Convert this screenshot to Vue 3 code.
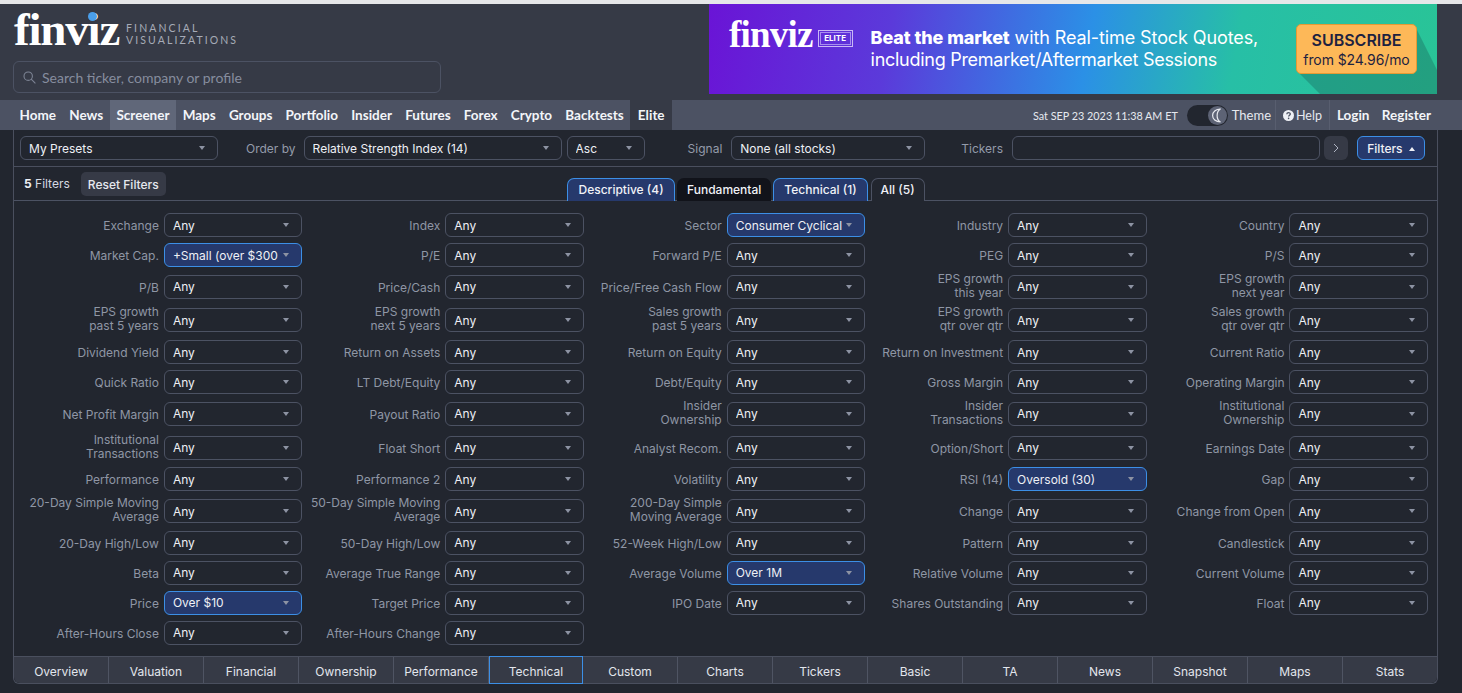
<script setup>
const navLeft = ["Home", "News", "Screener", "Maps", "Groups", "Portfolio", "Insider", "Futures", "Forex", "Crypto", "Backtests"]
const views = ["Overview", "Valuation", "Financial", "Ownership", "Performance", "Technical", "Custom", "Charts", "Tickers", "Basic", "TA", "News", "Snapshot", "Maps", "Stats"]

// label, picked value (only for the active filters), tall = two line row
const rows = [
  { cells: [["Exchange"], ["Index"], ["Sector", "Consumer Cyclical"], ["Industry"], ["Country"]] },
  { cells: [["Market Cap.", "+Small (over $300"], ["P/E"], ["Forward P/E"], ["PEG"], ["P/S"]] },
  { tall: true, cells: [["P/B"], ["Price/Cash"], ["Price/Free Cash Flow"], ["EPS growth\nthis year"], ["EPS growth\nnext year"]] },
  { tall: true, cells: [["EPS growth\npast 5 years"], ["EPS growth\nnext 5 years"], ["Sales growth\npast 5 years"], ["EPS growth\nqtr over qtr"], ["Sales growth\nqtr over qtr"]] },
  { cells: [["Dividend Yield"], ["Return on Assets"], ["Return on Equity"], ["Return on Investment"], ["Current Ratio"]] },
  { cells: [["Quick Ratio"], ["LT Debt/Equity"], ["Debt/Equity"], ["Gross Margin"], ["Operating Margin"]] },
  { tall: true, cells: [["Net Profit Margin"], ["Payout Ratio"], ["Insider\nOwnership"], ["Insider\nTransactions"], ["Institutional\nOwnership"]] },
  { tall: true, cells: [["Institutional\nTransactions"], ["Float Short"], ["Analyst Recom."], ["Option/Short"], ["Earnings Date"]] },
  { cells: [["Performance"], ["Performance 2"], ["Volatility"], ["RSI (14)", "Oversold (30)"], ["Gap"]] },
  { tall: true, cells: [["20-Day Simple Moving\nAverage"], ["50-Day Simple Moving\nAverage"], ["200-Day Simple\nMoving Average"], ["Change"], ["Change from Open"]] },
  { cells: [["20-Day High/Low"], ["50-Day High/Low"], ["52-Week High/Low"], ["Pattern"], ["Candlestick"]] },
  { cells: [["Beta"], ["Average True Range"], ["Average Volume", "Over 1M"], ["Relative Volume"], ["Current Volume"]] },
  { cells: [["Price", "Over $10"], ["Target Price"], ["IPO Date"], ["Shares Outstanding"], ["Float"]] },
  { cells: [["After-Hours Close"], ["After-Hours Change"]] },
]
</script>

<template>
  <div class="page">
    <header class="header">
      <div class="brand">
        <div class="logo-row">
          <div class="logo">finviz<span class="logo-dot"></span></div>
          <div class="tagline">FINANCIAL<br />VISUALIZATIONS</div>
        </div>
        <div class="search">
          <svg width="13" height="13" viewBox="0 0 13 13" fill="none" stroke="#7d8494" stroke-width="1.1">
            <circle cx="5.2" cy="5.2" r="4.2" />
            <path d="M8.2 8.2 12.4 12.4" />
          </svg>
          <span>Search ticker, company or profile</span>
        </div>
      </div>
      <div class="banner">
        <div class="banner-shadow"></div>
        <div class="banner-logo">finviz</div>
        <div class="elite-badge"><span>ELITE</span></div>
        <div class="banner-text">
          <div><b>Beat the market</b> with Real-time Stock Quotes,</div>
          <div class="second">including Premarket/Aftermarket Sessions</div>
        </div>
        <div class="subscribe">
          <strong>SUBSCRIBE</strong>
          <span>from $24.96/mo</span>
        </div>
      </div>
    </header>

    <nav class="nav">
      <a v-for="item in navLeft" :key="item" class="nav-item" :class="{ current: item === 'Screener' }">{{ item }}</a>
      <a class="nav-item elite">Elite</a>
      <div class="nav-right">
        <span class="date">Sat SEP 23 2023 11:38 AM ET</span>
        <div class="theme">
          <div class="toggle">
            <div class="knob">
              <svg width="12" height="15" viewBox="0 0 12 15" fill="none" stroke="#e8eaf0" stroke-width="1.2">
                <path d="M9.5 1C5.4 3 4.6 11.4 9.5 14 4.6 14 1.6 11 1.6 7.5S4.6 1 9.5 1Z" />
              </svg>
            </div>
          </div>
          <span>Theme</span>
        </div>
        <div class="help">
          <svg width="11" height="11" viewBox="0 0 11 11">
            <circle cx="5.5" cy="5.5" r="5.5" fill="#eef0f5" />
            <path d="M3.8 4.2C3.9 2.2 7.3 2.2 7.3 4.1 7.3 5.3 5.6 5.3 5.6 6.6" fill="none" stroke="#4c5263" stroke-width="1.3" />
            <circle cx="5.6" cy="8.4" r=".8" fill="#4c5263" />
          </svg>
          <span>Help</span>
        </div>
        <a class="nav-item login">Login</a>
        <a class="nav-item register">Register</a>
      </div>
    </nav>

    <main class="panel">
      <div class="toolbar">
        <div class="select presets"><span>My Presets</span><i></i></div>
        <label class="order-label">Order by</label>
        <div class="select order"><span>Relative Strength Index (14)</span><i></i></div>
        <div class="select asc"><span>Asc</span><i></i></div>
        <label class="signal-label">Signal</label>
        <div class="select signal"><span>None (all stocks)</span><i></i></div>
        <label class="tickers-label">Tickers</label>
        <div class="tickers-input"></div>
        <button class="go">
          <svg width="6" height="10" viewBox="0 0 6 10" fill="none" stroke="#aeb4c2"><path d="M1 1l4 4-4 4" /></svg>
        </button>
        <button class="filters-btn">Filters <em></em></button>
      </div>

      <div class="tabs-row">
        <div class="count"><b>5</b> Filters</div>
        <button class="reset">Reset Filters</button>
        <div class="tabs">
          <div class="tab on">Descriptive (4)</div>
          <div class="tab black">Fundamental</div>
          <div class="tab on tech">Technical (1)</div>
          <div class="tab all">All (5)</div>
        </div>
      </div>

      <div class="filters">
        <div v-for="(row, r) in rows" :key="r" class="filter-row" :class="{ tall: row.tall }">
          <div v-for="cell in row.cells" :key="cell[0]" class="filter">
            <div class="filter-label" :class="{ two: cell[0].includes('\n') }">{{ cell[0] }}</div>
            <div class="select" :class="{ picked: cell[1] }"><span>{{ cell[1] || "Any" }}</span><i></i></div>
          </div>
        </div>
      </div>

      <div class="views">
        <div v-for="view in views" :key="view" class="view" :class="{ active: view === 'Technical' }">{{ view }}</div>
      </div>
    </main>
  </div>
</template>

<style scoped>
.page {
  width: 1462px;
  height: 693px;
  overflow: hidden;
  background: #22262f;
  border-top: 4px solid #e6e7e9;
  box-sizing: border-box;
  font-family: Inter, "Liberation Sans", sans-serif;
  font-size: 12px;
  color: #e6e9ef;
}

.header {
  height: 96px;
  background: #363a46;
  display: flex;
  justify-content: space-between;
  padding: 0 25px 0 13px;
}

.logo-row {
  display: flex;
  align-items: flex-end;
  height: 41px;
  padding-top: 4px;
}

.logo {
  position: relative;
  font-family: "Liberation Serif", serif;
  font-weight: 700;
  font-size: 47px;
  line-height: 40px;
  letter-spacing: -1.2px;
  color: #fff;
  margin-left: 1px;
}

.logo-dot {
  position: absolute;
  left: 74px;
  top: 3px;
  width: 9px;
  height: 9px;
  border-radius: 50%;
  background: #4a9eea;
}

.tagline {
  font-family: Lato, sans-serif;
  font-size: 10.5px;
  line-height: 12px;
  letter-spacing: 2.1px;
  color: #a6abb7;
  margin: 0 0 3px 7px;
}

.search {
  width: 428px;
  height: 32px;
  margin-top: 12px;
  box-sizing: border-box;
  border: 1px solid #4c5263;
  border-radius: 6px;
  display: flex;
  align-items: center;
  gap: 6px;
  padding-left: 9px;
  font-family: Lato, sans-serif;
  font-size: 14px;
  color: #868d9e;
}

.banner {
  position: relative;
  width: 728px;
  height: 90px;
  background: linear-gradient(100deg, #6a14d6 0%, #5b3ada 25%, #2b90e6 52%, #27bfa6 72%, #29c497 100%);
  display: flex;
  align-items: flex-start;
  color: #fff;
}

.banner-shadow {
  position: absolute;
  inset: 0;
  background: rgba(20, 70, 70, 0.28);
  clip-path: polygon(708px 26px, 728px 66px, 728px 90px, 611px 90px, 587px 66px);
}

.banner-logo {
  font-family: "Liberation Serif", serif;
  font-weight: 700;
  font-size: 37px;
  line-height: 30px;
  letter-spacing: -0.8px;
  margin: 16px 0 0 20px;
}

.elite-badge {
  width: 35px;
  height: 17px;
  box-sizing: border-box;
  border: 1px solid #c9b8f5;
  margin: 26px 0 0 5px;
  padding: 1px;
  display: flex;
}

.elite-badge span {
  flex: 1;
  border: 1px solid #a88ef0;
  font-size: 8px;
  font-weight: 700;
  line-height: 11px;
  text-align: center;
}

.banner-text {
  margin: 23px 0 0 18px;
  font-size: 18px;
  line-height: 22px;
  letter-spacing: -0.1px;
}

.banner-text b {
  font-weight: 800;
}

.banner-text .second {
  letter-spacing: -0.28px;
}

.subscribe {
  position: absolute;
  left: 587px;
  top: 20px;
  width: 121px;
  height: 50px;
  box-sizing: border-box;
  background: #fdb858;
  border: 1px solid #e59a34;
  border-radius: 5px;
  display: flex;
  flex-direction: column;
  align-items: center;
  padding-top: 6px;
  color: #1d2240;
}

.subscribe strong {
  font-size: 16px;
  line-height: 19px;
  font-weight: 600;
}

.subscribe span {
  font-size: 14px;
  line-height: 19px;
  font-weight: 400;
  letter-spacing: -0.1px;
}

.nav {
  height: 30px;
  background: #4c5263;
  display: flex;
  padding-left: 13px;
  padding-right: 31px;
}

.nav-item {
  display: flex;
  align-items: center;
  padding: 0 6.6px;
  font-family: Lato, sans-serif;
  font-size: 13.5px;
  font-weight: 700;
  color: #f3f5f9;
}

.nav-item.current {
  background: #606779;
}

.nav-item.elite {
  background: #363a46;
  padding: 0 7.5px;
}

.nav-right {
  margin-left: auto;
  display: flex;
  align-items: center;
  height: 100%;
}

.date {
  font-family: Lato, sans-serif;
  font-size: 10.8px;
  margin-right: 9px;
}

.theme {
  display: flex;
  align-items: center;
  gap: 4px;
  height: 100%;
  padding: 0 4px 0 0;
  font-family: Lato, sans-serif;
  font-size: 13px;
}

.toggle {
  width: 41px;
  height: 21px;
  border-radius: 11px;
  background: #22262f;
  position: relative;
}

.knob {
  position: absolute;
  right: 1px;
  top: 1px;
  width: 19px;
  height: 19px;
  border-radius: 50%;
  background: #5d6375;
  display: flex;
  align-items: center;
  justify-content: center;
}

.help {
  display: flex;
  align-items: center;
  gap: 2px;
  height: 100%;
  padding: 0 7px;
  border-left: 1px solid #585e6f;
  border-right: 1px solid #585e6f;
  font-family: Lato, sans-serif;
  font-size: 12.5px;
}

.login {
  margin-left: 7px;
  padding: 0 6.2px 0 0;
}

.register {
  padding: 0 0 0 6.2px;
}

.panel {
  width: 1425px;
  height: 554px;
  margin-left: 13px;
  box-sizing: border-box;
  border: 1px solid #4a4f5e;
  border-top: 0;
  border-radius: 0 0 6px 6px;
  display: flex;
  flex-direction: column;
}

.toolbar {
  height: 37px;
  flex: none;
  box-sizing: border-box;
  border-bottom: 1px solid #4a4f5e;
  display: flex;
  align-items: flex-start;
  padding: 6px 0 0 6px;
}

.select {
  height: 24px;
  width: 138.5px;
  flex: none;
  box-sizing: border-box;
  border: 1px solid #4c5263;
  border-radius: 6px;
  display: flex;
  align-items: center;
  padding: 0 12px 0 8px;
  gap: 4px;
  color: #eef0f5;
}

.select span {
  flex: 1;
  min-width: 0;
  overflow: hidden;
  white-space: nowrap;
}

.select i {
  flex: none;
  width: 0;
  height: 0;
  border-left: 3.5px solid transparent;
  border-right: 3.5px solid transparent;
  border-top: 4px solid #8d93a3;
}

.select.picked {
  background: #26396c;
  border-color: #3c8fe6;
}

.select.presets {
  width: 198px;
}

.select.order {
  width: 258px;
}

.select.asc {
  width: 78px;
  margin-left: 5px;
}

.select.signal {
  width: 194px;
}

.toolbar label {
  color: #949baa;
  line-height: 25px;
  flex: none;
}

.order-label {
  margin: 0 8px 0 28px;
}

.signal-label {
  margin: 0 9px 0 43px;
}

.tickers-label {
  margin: 0 9px 0 36px;
}

.tickers-input {
  width: 308px;
  height: 24px;
  box-sizing: border-box;
  border: 1px solid #4c5263;
  border-radius: 6px;
}

.go {
  width: 24px;
  height: 24px;
  margin-left: 4px;
  padding: 0;
  border: 0;
  border-radius: 6px;
  background: #363a46;
}

.filters-btn {
  width: 68px;
  height: 24px;
  margin-left: 9px;
  padding: 0;
  border: 1px solid #3c8fe6;
  border-radius: 6px;
  background: #26396c;
  color: #eef0f5;
  font: inherit;
  font-weight: 500;
}

.filters-btn em {
  display: inline-block;
  width: 0;
  height: 0;
  margin: 0 0 2px 3px;
  border-left: 3.5px solid transparent;
  border-right: 3.5px solid transparent;
  border-bottom: 4px solid #eef0f5;
}

.tabs-row {
  height: 34px;
  flex: none;
  box-sizing: border-box;
  position: relative;
  display: flex;
  align-items: flex-start;
  padding: 5px 0 0 10px;
}

.count {
  line-height: 24px;
  color: #d5d9e2;
}

.count b {
  color: #eef0f5;
  font-weight: 700;
}

.reset {
  height: 24px;
  width: 85px;
  margin-left: 11px;
  padding: 0;
  border: 0;
  border-radius: 5px;
  background: #363a46;
  color: #e6e9ef;
  font: inherit;
  font-weight: 500;
}

.tabs {
  position: absolute;
  left: 0;
  right: 0;
  top: 11px;
  height: 23px;
  box-sizing: border-box;
  border-bottom: 1px solid #4c5263;
  display: flex;
  gap: 2px;
  padding-left: 553px;
  pointer-events: none;
}

.tab {
  height: 23px;
  box-sizing: border-box;
  padding: 0 10.5px;
  border-radius: 7px 7px 0 0;
  line-height: 24px;
  font-weight: 500;
  color: #f0f2f7;
}

.tab.on {
  background: #26396c;
  border: 1px solid #3c8fe6;
  border-bottom: 0;
  line-height: 22px;
}

.tab.on.tech {
  padding: 0 10px;
}

.tab.black {
  background: #11131a;
  padding: 0 10px;
}

.tab.all {
  background: #22262f;
  border: 1px solid #4c5263;
  border-bottom: 0;
  padding: 0 9px;
  line-height: 22px;
  margin-left: 1px;
}

.filters {
  flex: 1;
  padding: 9px 9px 0 7px;
}

.filter-row {
  display: grid;
  grid-template-columns: repeat(5, 1fr);
  height: 30px;
}

.filter-row.tall {
  height: 33.6px;
}

.filter {
  display: flex;
  align-items: center;
  justify-content: flex-end;
  gap: 5px;
}

.filter-label {
  text-align: right;
  white-space: pre-line;
  line-height: 14px;
  padding-top: 2px;
  color: #8f96a5;
}

.filter-label.two {
  padding: 0 0 2px;
}

.views {
  flex: none;
  height: 27px;
  box-sizing: border-box;
  display: flex;
  background: #363a46;
  border-top: 1px solid #4a4f5e;
  border-radius: 0 0 6px 6px;
}

.view {
  flex: 1;
  display: flex;
  align-items: center;
  justify-content: center;
  padding-top: 2px;
  border-right: 1px solid #4f5463;
  color: #e3e6ed;
}

.view:last-child {
  border-right: 0;
}

.view.active {
  box-shadow: inset 0 0 0 1px #3c8fe6;
  margin-top: -1px;
  margin-bottom: -1px;
  padding-top: 3px;
  border-right: 0;
}
</style>
